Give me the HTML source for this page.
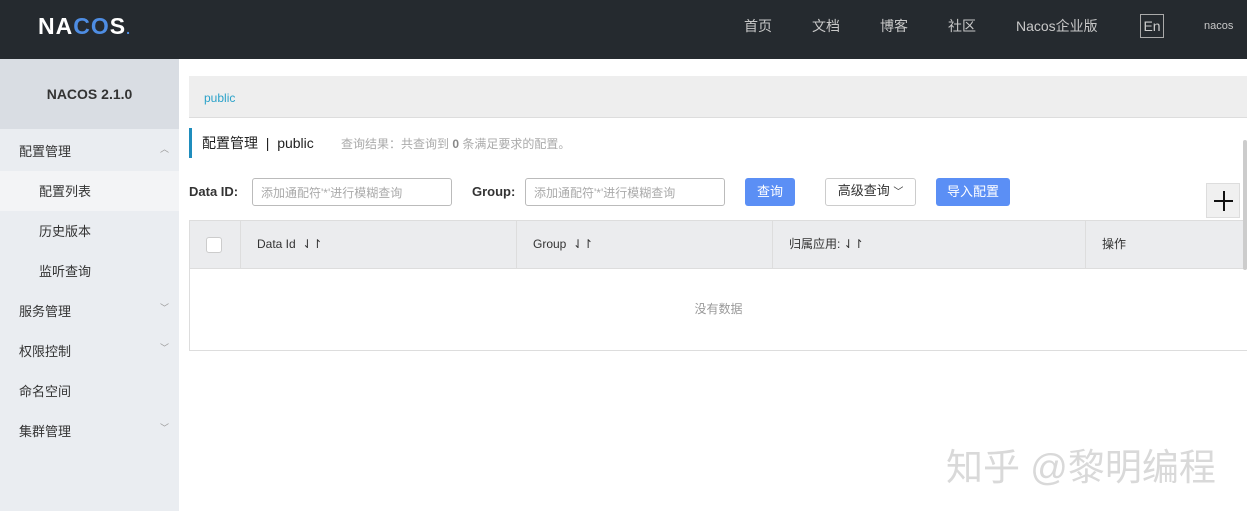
<!DOCTYPE html>
<html><head><meta charset="utf-8"><style>
*{margin:0;padding:0;box-sizing:border-box}
body{width:1247px;height:511px;overflow:hidden;background:#fff;font-family:"Liberation Sans","Noto Sans CJK SC",sans-serif;position:relative}
.top{position:absolute;left:0;top:0;width:1247px;height:59px;background:#252a2f}
.logo{position:absolute;left:38px;top:13px;color:#fff;font-size:23px;font-weight:bold;letter-spacing:1px}
.logo i{font-style:normal;color:#4e8de3}
.nav{position:absolute;top:16px;color:#c8c8c8;font-size:14px}
.en{position:absolute;left:1140px;top:14px;width:24px;height:24px;border:1px solid #aaa;color:#ccc;font-size:14px;text-align:center;line-height:22px}
.side{position:absolute;left:0;top:59px;width:179px;height:452px;background:#eaedf1}
.sh{height:70px;background:#d9dde3;text-align:center;line-height:70px;font-weight:bold;font-size:14px;color:#333}
.it{position:absolute;left:19px;font-size:13px;color:#333}
.sub{left:39px}
.act{position:absolute;left:0;top:171px;width:179px;height:40px;background:#f3f4f6}
.ar{position:absolute;left:160px;font-size:9px;color:#999}
.bc{position:absolute;left:189px;top:76px;width:1058px;height:42px;background:#eeeeee;border-bottom:1px solid #ddd}
.bc span{position:absolute;left:15px;top:15px;font-size:12px;color:#2ba2c9}
.tl{position:absolute;left:189px;top:128px;width:3px;height:30px;background:#1f8dbd}
.input{position:absolute;top:178px;height:28px;border:1px solid #bbb;border-radius:3px;font-size:12px;color:#aaa;padding:5px 8px}
.lbl{position:absolute;top:184px;font-size:13px;font-weight:bold;color:#333}
.btn{position:absolute;top:178px;height:28px;border-radius:3px;font-size:13px;text-align:center;line-height:27px}
.blue{background:#5b8ff5;color:#fff}
.tbl{position:absolute;left:189px;top:220px;width:1058px;height:131px;border:1px solid #ddd;border-right:none}
.th{height:48px;background:#ebecee;border-bottom:1px solid #ddd;position:relative}
.th div{position:absolute;top:0;height:48px;line-height:46px;font-size:12px;color:#333;border-left:1px solid #ddd;padding-left:16px}
</style></head><body>
<div class="top">
<div class="logo">NA<i>CO</i>S<span style="color:#4e8de3;font-size:14px">.</span></div>
<div class="nav" style="left:744px">首页</div>
<div class="nav" style="left:812px">文档</div>
<div class="nav" style="left:880px">博客</div>
<div class="nav" style="left:948px">社区</div>
<div class="nav" style="left:1016px">Nacos企业版</div>
<div class="en">En</div>
<div class="nav" style="left:1204px;font-size:11px;top:20px">nacos</div>
</div>
<div class="side">
<div class="sh">NACOS 2.1.0</div>
</div>
<div class="act" style="top:171px"></div>
<div class="it" style="top:141px">配置管理</div><div class="ar" style="top:142px">︿</div>
<div class="it sub" style="top:181px">配置列表</div>
<div class="it sub" style="top:221px">历史版本</div>
<div class="it sub" style="top:261px">监听查询</div>
<div class="it" style="top:301px">服务管理</div><div class="ar" style="top:301px">﹀</div>
<div class="it" style="top:341px">权限控制</div><div class="ar" style="top:341px">﹀</div>
<div class="it" style="top:381px">命名空间</div>
<div class="it" style="top:421px">集群管理</div><div class="ar" style="top:421px">﹀</div>
<div class="bc"><span>public</span></div>
<div class="tl"></div>
<div style="position:absolute;left:202px;top:133px;font-size:14px;color:#222">配置管理 &nbsp;|&nbsp; public</div>
<div style="position:absolute;left:341px;top:135px;font-size:12px;color:#aaa">查询结果：共查询到 <b style="color:#888">0</b> 条满足要求的配置。</div>
<div class="lbl" style="left:189px">Data ID:</div>
<div class="input" style="left:252px;width:200px">添加通配符'*'进行模糊查询</div>
<div class="lbl" style="left:472px">Group:</div>
<div class="input" style="left:525px;width:200px">添加通配符'*'进行模糊查询</div>
<div class="btn blue" style="left:745px;width:50px">查询</div>
<div class="btn" style="left:825px;width:91px;border:1px solid #ccc;color:#333;line-height:24px">高级查询 <span style="font-size:10px">﹀</span></div>
<div class="btn blue" style="left:936px;width:74px">导入配置</div>
<div style="position:absolute;left:1206px;top:183px;width:34px;height:35px;background:#f0f0f0;border:1px solid #ddd"><div style="position:absolute;left:7px;top:16px;width:19px;height:2px;background:#111"></div><div style="position:absolute;left:16px;top:7px;width:2px;height:20px;background:#111"></div></div>
<div class="tbl"><div class="th">
<div style="left:0;border:none"><span style="display:inline-block;width:16px;height:16px;border:1px solid #ccc;border-radius:3px;background:#fff;vertical-align:middle"></span></div>
<div style="left:50px">Data Id &nbsp;⇃↾</div>
<div style="left:326px">Group &nbsp;⇃↾</div>
<div style="left:582px">归属应用: ⇃↾</div>
<div style="left:895px;width:170px">操作</div>
</div>
<div style="text-align:center;font-size:12px;color:#999;margin-top:31px">没有数据</div>
</div>
<div style="position:absolute;left:1243px;top:140px;width:4px;height:130px;background:#ccc;border-radius:2px"></div>
<div style="position:absolute;left:946px;top:437px;font-size:37px;color:#d9d9d9;letter-spacing:0px">知乎 @黎明编程</div>
</body></html>
